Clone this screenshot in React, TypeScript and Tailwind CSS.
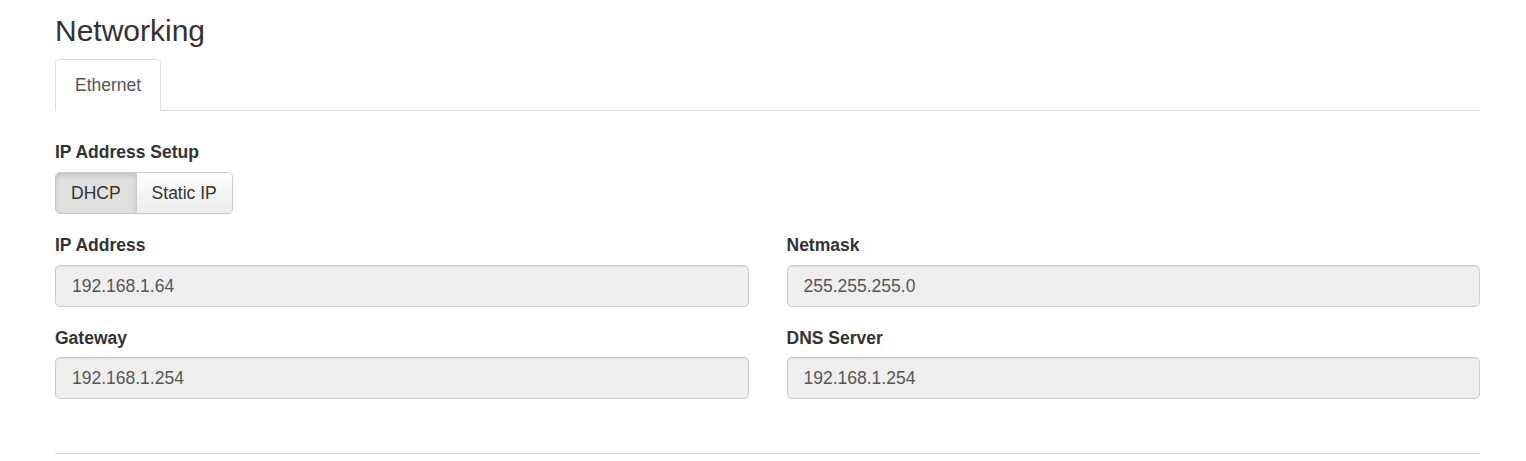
import React from "react";

const font = { fontFamily: '"Liberation Sans", Arial, Helvetica, sans-serif' };

function Field({ label, value, first }: { label: string; value: string; first?: boolean }) {
  return (
    <div className="flex-1">
      <div className="mt-[19px] h-[25px] leading-[25px] text-[17.5px] font-bold text-[#333]">
        {label}
      </div>
      <div className={`${first ? "mt-[7px]" : "mt-[6px]"} h-[42px] flex items-center px-[16px] rounded-[5px] border border-[#ccc] bg-[#eee] text-[17.5px] text-[#555] shadow-[inset_0_1px_1px_rgba(0,0,0,0.075)]`}>
        {value}
      </div>
    </div>
  );
}

export default function App() {
  return (
    <div className="min-h-screen bg-white" style={font}>
      <div className="w-[1425px] ml-[55px]">
        {/* ── Title ── */}
        <h3 className="pt-[14px] h-[47px] leading-[33px] text-[30px] text-[#333]">Networking</h3>

        {/* ── Tabs ── */}
        <div className="mt-[12px] flex border-b border-[#ddd]">
          <div className="h-[52px] -mb-px px-[19px] flex items-center border border-[#ddd] border-b-white bg-white rounded-t-[5px] text-[17.5px] text-[#555]">
            Ethernet
          </div>
        </div>

        {/* ── IP setup ── */}
        <div className="mt-[29px] h-[25px] leading-[25px] text-[17.5px] font-bold text-[#333]">IP Address Setup</div>
        <div className="mt-[7px] flex">
          <button className="h-[42px] px-[15px] text-[17.5px] text-[#333] bg-[#e0e0e0] border border-[#ccc] rounded-l-[5px] shadow-[inset_0_3px_5px_rgba(0,0,0,0.125)]">
            DHCP
          </button>
          <button className="h-[42px] px-[15px] -ml-px text-[17.5px] text-[#333] bg-gradient-to-b from-white to-[#ececec] border border-[#ccc] rounded-r-[5px] shadow-[0_1px_1px_rgba(0,0,0,0.05)]">
            Static IP
          </button>
        </div>

        {/* ── Address fields ── */}
        <div className="flex gap-[38px]">
          <Field label="IP Address" value="192.168.1.64" first />
          <Field label="Netmask" value="255.255.255.0" first />
        </div>
        <div className="flex gap-[38px]">
          <Field label="Gateway" value="192.168.1.254" />
          <Field label="DNS Server" value="192.168.1.254" />
        </div>

        <div className="mt-[54px] border-t border-[#dedede]" />
      </div>
    </div>
  );
}
